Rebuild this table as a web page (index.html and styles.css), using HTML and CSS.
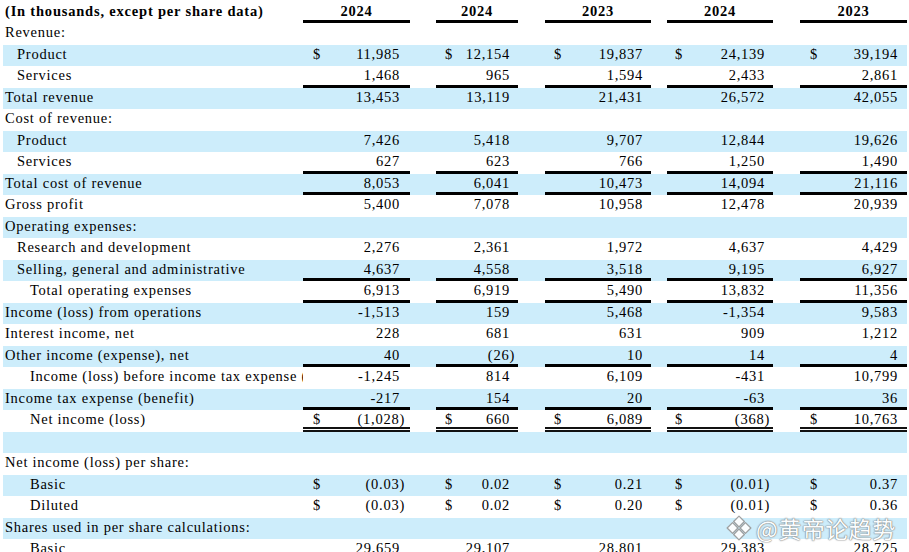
FILE: index.html
```html
<!DOCTYPE html>
<html lang="en">
<head>
<meta charset="utf-8">
<title>Statement of Operations</title>
<link rel="stylesheet" href="styles.css">
</head>
<body>
<div class="sheet">
  <div class="row head">
    <div class="label">(In thousands, except per share data)</div>
    <div class="g c1 ul">2024</div><div class="g c2 ul">2024</div><div class="g c3 ul">2023</div><div class="g c4 ul">2024</div><div class="g c5 ul">2023</div>
  </div>
  <div class="row"><div class="label">Revenue:</div></div>
  <div class="row blue">
    <div class="label i1">Product</div>
    <div class="g c1"><span>$</span><span>11,985</span></div><div class="g c2"><span>$</span><span>12,154</span></div><div class="g c3"><span>$</span><span>19,837</span></div><div class="g c4"><span>$</span><span>24,139</span></div><div class="g c5"><span>$</span><span>39,194</span></div>
  </div>
  <div class="row">
    <div class="label i1">Services</div>
    <div class="g c1 ul"><span>1,468</span></div><div class="g c2 ul"><span>965</span></div><div class="g c3 ul"><span>1,594</span></div><div class="g c4 ul"><span>2,433</span></div><div class="g c5 ul"><span>2,861</span></div>
  </div>
  <div class="row blue">
    <div class="label">Total revenue</div>
    <div class="g c1"><span>13,453</span></div><div class="g c2"><span>13,119</span></div><div class="g c3"><span>21,431</span></div><div class="g c4"><span>26,572</span></div><div class="g c5"><span>42,055</span></div>
  </div>
  <div class="row"><div class="label">Cost of revenue:</div></div>
  <div class="row blue">
    <div class="label i1">Product</div>
    <div class="g c1"><span>7,426</span></div><div class="g c2"><span>5,418</span></div><div class="g c3"><span>9,707</span></div><div class="g c4"><span>12,844</span></div><div class="g c5"><span>19,626</span></div>
  </div>
  <div class="row">
    <div class="label i1">Services</div>
    <div class="g c1 ul"><span>627</span></div><div class="g c2 ul"><span>623</span></div><div class="g c3 ul"><span>766</span></div><div class="g c4 ul"><span>1,250</span></div><div class="g c5 ul"><span>1,490</span></div>
  </div>
  <div class="row blue">
    <div class="label">Total cost of revenue</div>
    <div class="g c1 ul"><span>8,053</span></div><div class="g c2 ul"><span>6,041</span></div><div class="g c3 ul"><span>10,473</span></div><div class="g c4 ul"><span>14,094</span></div><div class="g c5 ul"><span>21,116</span></div>
  </div>
  <div class="row">
    <div class="label">Gross profit</div>
    <div class="g c1"><span>5,400</span></div><div class="g c2"><span>7,078</span></div><div class="g c3"><span>10,958</span></div><div class="g c4"><span>12,478</span></div><div class="g c5"><span>20,939</span></div>
  </div>
  <div class="row blue"><div class="label">Operating expenses:</div></div>
  <div class="row">
    <div class="label i1">Research and development</div>
    <div class="g c1"><span>2,276</span></div><div class="g c2"><span>2,361</span></div><div class="g c3"><span>1,972</span></div><div class="g c4"><span>4,637</span></div><div class="g c5"><span>4,429</span></div>
  </div>
  <div class="row blue">
    <div class="label i1">Selling, general and administrative</div>
    <div class="g c1 ul"><span>4,637</span></div><div class="g c2 ul"><span>4,558</span></div><div class="g c3 ul"><span>3,518</span></div><div class="g c4 ul"><span>9,195</span></div><div class="g c5 ul"><span>6,927</span></div>
  </div>
  <div class="row">
    <div class="label i2">Total operating expenses</div>
    <div class="g c1 ul"><span>6,913</span></div><div class="g c2 ul"><span>6,919</span></div><div class="g c3 ul"><span>5,490</span></div><div class="g c4 ul"><span>13,832</span></div><div class="g c5 ul"><span>11,356</span></div>
  </div>
  <div class="row blue">
    <div class="label">Income (loss) from operations</div>
    <div class="g c1"><span>-1,513</span></div><div class="g c2"><span>159</span></div><div class="g c3"><span>5,468</span></div><div class="g c4"><span>-1,354</span></div><div class="g c5"><span>9,583</span></div>
  </div>
  <div class="row">
    <div class="label">Interest income, net</div>
    <div class="g c1"><span>228</span></div><div class="g c2"><span>681</span></div><div class="g c3"><span>631</span></div><div class="g c4"><span>909</span></div><div class="g c5"><span>1,212</span></div>
  </div>
  <div class="row blue">
    <div class="label">Other income (expense), net</div>
    <div class="g c1 ul"><span>40</span></div><div class="g c2 ul"><span class="par">(26)</span></div><div class="g c3 ul"><span>10</span></div><div class="g c4 ul"><span>14</span></div><div class="g c5 ul"><span>4</span></div>
  </div>
  <div class="row">
    <div class="label i2">Income (loss) before income tax expense (benefit)</div>
    <div class="g c1"><span>-1,245</span></div><div class="g c2"><span>814</span></div><div class="g c3"><span>6,109</span></div><div class="g c4"><span>-431</span></div><div class="g c5"><span>10,799</span></div>
  </div>
  <div class="row blue">
    <div class="label">Income tax expense (benefit)</div>
    <div class="g c1 ul"><span>-217</span></div><div class="g c2 ul"><span>154</span></div><div class="g c3 ul"><span>20</span></div><div class="g c4 ul"><span>-63</span></div><div class="g c5 ul"><span>36</span></div>
  </div>
  <div class="row">
    <div class="label i2">Net income (loss)</div>
    <div class="g c1 dul"><span>$</span><span class="par">(1,028)</span></div><div class="g c2 dul"><span>$</span><span>660</span></div><div class="g c3 dul"><span>$</span><span>6,089</span></div><div class="g c4 dul"><span>$</span><span class="par">(368)</span></div><div class="g c5 dul"><span>$</span><span>10,763</span></div>
  </div>
  <div class="row blue"><div class="label"></div></div>
  <div class="row"><div class="label">Net income (loss) per share:</div></div>
  <div class="row blue">
    <div class="label i2">Basic</div>
    <div class="g c1"><span>$</span><span class="par">(0.03)</span></div><div class="g c2"><span>$</span><span>0.02</span></div><div class="g c3"><span>$</span><span>0.21</span></div><div class="g c4"><span>$</span><span class="par">(0.01)</span></div><div class="g c5"><span>$</span><span>0.37</span></div>
  </div>
  <div class="row">
    <div class="label i2">Diluted</div>
    <div class="g c1"><span>$</span><span class="par">(0.03)</span></div><div class="g c2"><span>$</span><span>0.02</span></div><div class="g c3"><span>$</span><span>0.20</span></div><div class="g c4"><span>$</span><span class="par">(0.01)</span></div><div class="g c5"><span>$</span><span>0.36</span></div>
  </div>
  <div class="row blue"><div class="label">Shares used in per share calculations:</div></div>
  <div class="row">
    <div class="label i2">Basic</div>
    <div class="g c1"><span>29,659</span></div><div class="g c2"><span>29,107</span></div><div class="g c3"><span>28,801</span></div><div class="g c4"><span>29,383</span></div><div class="g c5"><span>28,725</span></div>
  </div>

  <div class="watermark">
    <svg class="wm-logo" width="28" height="28" viewBox="0 0 26 26">
      <g fill="#ffffff" stroke="#9a9a9a" stroke-width="1.2" stroke-linejoin="round">
        <path d="M13 2 L18 7 L13 12 L8 7 Z"/>
        <path d="M19 8 L24 13 L19 18 L14 13 Z"/>
        <path d="M13 14 L18 19 L13 24 L8 19 Z"/>
        <path d="M7 8 L12 13 L7 18 L2 13 Z"/>
      </g>
    </svg>
    <span class="wm-text">@黄帝论趋势</span>
  </div>
</div>
</body>
</html>
```

FILE: styles.css
```css
html, body {
  margin: 0;
  padding: 0;
  background: #ffffff;
}

.sheet {
  position: relative;
  width: 909px;
  height: 552px;
  overflow: hidden;
  padding: 1px 0 0 3px;
  box-sizing: border-box;
  font-family: "Liberation Serif", "Times New Roman", serif;
  font-size: 14.5px;
  letter-spacing: 0.75px;
  color: #000000;
}

.row {
  display: flex;
  width: 904px;
  height: 21.5px;
  line-height: 19.5px;
  white-space: nowrap;
}

.row.head {
  height: 22px;
  font-weight: bold;
  line-height: 21px;
  letter-spacing: 0.8px;
}

.row.blue {
  background: #cdedfb;
}

.label {
  width: 300px;
  flex: none;
  padding-left: 2px;
  box-sizing: border-box;
  overflow: hidden;
}

.label.i1 { padding-left: 14px; }
.label.i2 { padding-left: 27px; }

.g {
  flex: none;
  display: flex;
  justify-content: space-between;
  box-sizing: border-box;
  height: 100%;
}

.g span:only-child {
  margin-left: auto;
}

.head .g {
  justify-content: center;
  padding: 0;
}

.c1 { width: 107px; padding: 0 10px 0 10px; }
.c2 { width: 82px; margin-left: 26px; padding: 0 8px 0 9px; }
.c3 { width: 106px; margin-left: 27px; padding: 0 8px 0 9px; }
.c4 { width: 106px; margin-left: 16px; padding: 0 8px 0 8px; }
.c5 { width: 107px; margin-left: 27px; padding: 0 9px 0 10px; }

.ul {
  border-bottom: 3px solid #000000;
}

.dul {
  border-bottom: 5px double #111111;
}

.par {
  margin-right: -5px;
}

.watermark {
  position: absolute;
  left: 725px;
  top: 511px;
  display: flex;
  align-items: center;
  gap: 3px;
  opacity: 0.92;
}

.wm-text {
  font-family: "Noto Sans CJK SC", "Noto Sans", sans-serif;
  font-size: 23px;
  letter-spacing: 0.5px;
  color: #ffffff;
  text-shadow: 0 0 1px #777777, 0 0 1px #777777, 0 0 2px #999999;
}
```
